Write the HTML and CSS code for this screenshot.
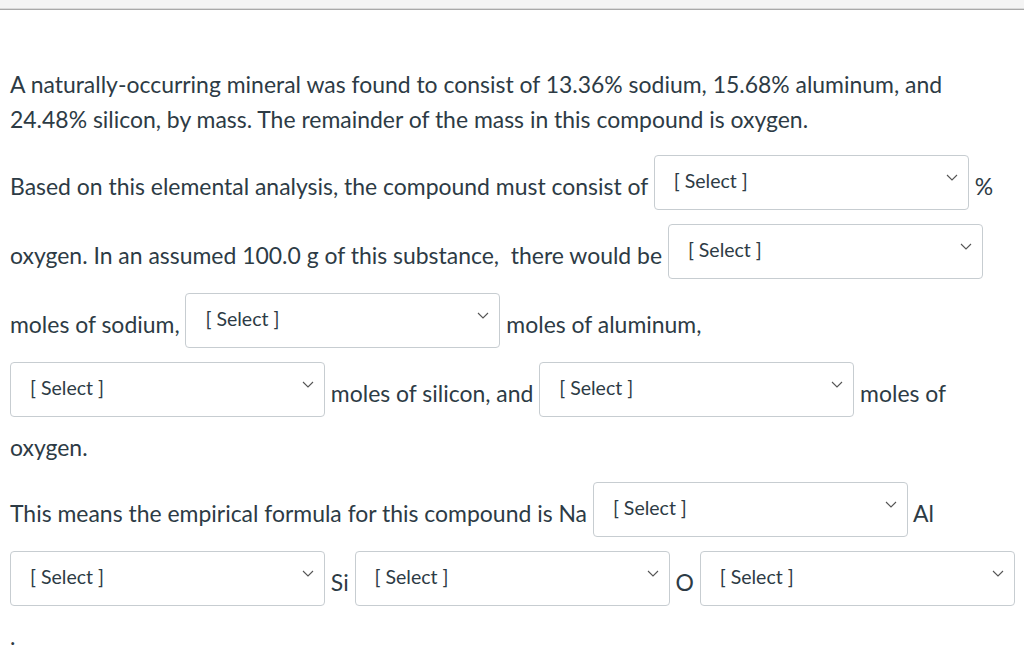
FILE: index.html
```html
<!DOCTYPE html>
<html lang="en">
<head>
<meta charset="utf-8">
<title>Empirical formula question</title>
<link rel="stylesheet" href="styles.css">
</head>
<body>
<div class="topbar"></div>
<div class="content">
<p class="intro">A naturally-occurring mineral was found to consist of 13.36% sodium, 15.68% aluminum, and 24.48% silicon, by mass. The remainder of the mass in this compound is oxygen.</p>
<p class="question">Based on this elemental analysis, the compound must consist of <span class="sel"><span class="sel-label">[ Select ]</span><svg class="chev" width="12" height="7" viewBox="0 0 12 7"><path d="M1 1 L6 6 L11 1" fill="none" stroke="#555" stroke-width="1.1"/></svg></span> % oxygen. In an assumed 100.0 g of this substance,&nbsp; there would be <span class="sel"><span class="sel-label">[ Select ]</span><svg class="chev" width="12" height="7" viewBox="0 0 12 7"><path d="M1 1 L6 6 L11 1" fill="none" stroke="#555" stroke-width="1.1"/></svg></span> moles of sodium, <span class="sel"><span class="sel-label">[ Select ]</span><svg class="chev" width="12" height="7" viewBox="0 0 12 7"><path d="M1 1 L6 6 L11 1" fill="none" stroke="#555" stroke-width="1.1"/></svg></span> moles of aluminum, <span class="sel"><span class="sel-label">[ Select ]</span><svg class="chev" width="12" height="7" viewBox="0 0 12 7"><path d="M1 1 L6 6 L11 1" fill="none" stroke="#555" stroke-width="1.1"/></svg></span> moles of silicon, and <span class="sel"><span class="sel-label">[ Select ]</span><svg class="chev" width="12" height="7" viewBox="0 0 12 7"><path d="M1 1 L6 6 L11 1" fill="none" stroke="#555" stroke-width="1.1"/></svg></span> moles of oxygen.<br>This means the empirical formula for this compound is Na <span class="sel"><span class="sel-label">[ Select ]</span><svg class="chev" width="12" height="7" viewBox="0 0 12 7"><path d="M1 1 L6 6 L11 1" fill="none" stroke="#555" stroke-width="1.1"/></svg></span> Al <span class="sel"><span class="sel-label">[ Select ]</span><svg class="chev" width="12" height="7" viewBox="0 0 12 7"><path d="M1 1 L6 6 L11 1" fill="none" stroke="#555" stroke-width="1.1"/></svg></span> Si <span class="sel"><span class="sel-label">[ Select ]</span><svg class="chev" width="12" height="7" viewBox="0 0 12 7"><path d="M1 1 L6 6 L11 1" fill="none" stroke="#555" stroke-width="1.1"/></svg></span> O <span class="sel"><span class="sel-label">[ Select ]</span><svg class="chev" width="12" height="7" viewBox="0 0 12 7"><path d="M1 1 L6 6 L11 1" fill="none" stroke="#555" stroke-width="1.1"/></svg></span> .</p>
</div>
</body>
</html>
```
FILE: styles.css
```css
html, body {
  margin: 0;
  padding: 0;
  background: #ffffff;
}

body {
  font-family: Lato, "Open Sans", "Liberation Sans", sans-serif;
  font-size: 22.95px;
  color: #2d3b45;
}

.topbar {
  height: 8px;
  background: #f4f4f4;
  border-bottom: 1px solid #dadada;
  box-shadow: 0 1px 0 #a9a9a9;
}

.content {
  padding: 58px 5px 0 10px;
}

.intro {
  margin: 0 0 9px 0;
  line-height: 35px;
}

.question {
  margin: 0;
  line-height: 51px;
}

.sel {
  display: inline-flex;
  align-items: center;
  justify-content: space-between;
  box-sizing: border-box;
  width: 315px;
  height: 55px;
  margin-top: 9px;
  margin-bottom: 5px;
  padding: 0 10px 0 19px;
  border: 1px solid #c7cdd1;
  border-radius: 4px;
  background: #ffffff;
  vertical-align: 7px;
  line-height: 24px;
}

.sel-label {
  font-size: 19.5px;
  color: #2d3b45;
  margin-bottom: 4px;
}

.chev {
  display: block;
  margin-top: -10px;
}
```
